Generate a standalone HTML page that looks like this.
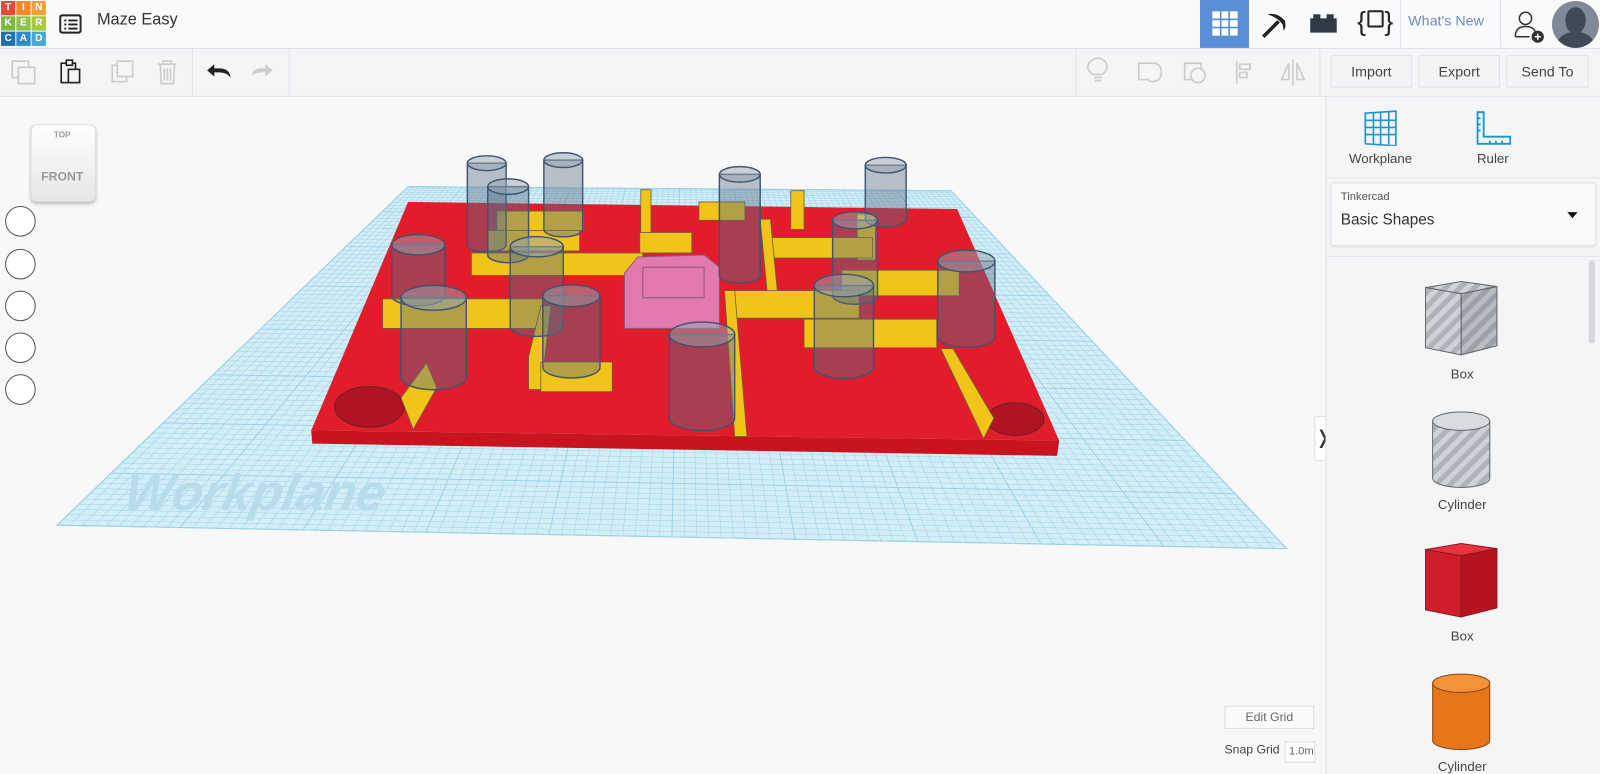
<!DOCTYPE html>
<html><head><meta charset="utf-8"><style>
html,body{margin:0;padding:0;width:1600px;height:774px;overflow:hidden;background:#f8f8f8;font-family:"Liberation Sans",sans-serif}
#w{position:absolute;left:0;top:0;width:1568px;height:759px;transform:scale(1.0204,1.0198);transform-origin:0 0;background:#f8f8f8}
.hdr{position:absolute;left:0;top:0;width:1568px;height:47px;background:#f9fafb;border-bottom:1px solid #dde1e6}
.tb{position:absolute;left:0;top:48px;width:1568px;height:46px;background:#f4f5f7;border-bottom:1px solid #e1e3e6}
.btn{position:absolute;top:54px;height:30px;border:1px solid #e2e4e7;background:#f3f4f6;color:#444;font-size:14px;line-height:30px;text-align:center}
.side{position:absolute;left:1299px;top:95px;width:269px;height:664px;background:#f4f5f7;border-left:1px solid #e3e5e8}
.lbl{position:absolute;font-size:13px;color:#444;text-align:center}
.circ{position:absolute;left:5px;width:30px;height:30px;border:1px solid #555;border-radius:50%;background:#fff;box-sizing:border-box}
</style></head><body><div id="w">
<div class="hdr">
 <div style="position:absolute;left:1px;top:1px;width:44px;height:44px;display:grid;grid-template-columns:repeat(3,14px);gap:1px;font:bold 10px 'Liberation Sans';color:#fff;text-align:center;line-height:14px">
  <div style="background:#e6483a">T</div><div style="background:#f08a2c">I</div><div style="background:#f0a03a">N</div>
  <div style="background:#7dbb3f">K</div><div style="background:#8fc24a">E</div><div style="background:#a8c83c">R</div>
  <div style="background:#1f6fb2">C</div><div style="background:#2f8ccc">A</div><div style="background:#4ba6d8">D</div></div>
 <svg style="position:absolute;left:58px;top:14px" width="22" height="20"><rect x="1" y="1" width="20" height="17" rx="2" fill="none" stroke="#222" stroke-width="2"/><path d="M5 6h2M9 6h9M5 10h2M9 10h9M5 14h2M9 14h9" stroke="#222" stroke-width="1.8"/></svg>
 <div style="position:absolute;left:95px;top:11px;font-size:16px;color:#333">Maze Easy</div>
 <div style="position:absolute;left:1176px;top:0;width:48px;height:47px;background:#5a8fd6"></div>
 <svg style="position:absolute;left:1188px;top:11px" width="25" height="24"><rect width="25" height="24" fill="#fff"/><path d="M8.3 0v24M16.6 0v24M0 8h25M0 16h25" stroke="#5a8fd6" stroke-width="1.6"/></svg>
 <svg style="position:absolute;left:1233px;top:9px" width="30" height="30"><path d="M5 27L20 12" stroke="#222" stroke-width="3.5"/><path d="M9 5q10 -2 17 6q2 6 -1 10l-1 -6q-5 -7 -15 -10z" fill="#222"/></svg>
 <svg style="position:absolute;left:1283px;top:13px" width="28" height="20"><rect x="1" y="5" width="26" height="14" fill="#2f3a48"/><rect x="4" y="1" width="7" height="6" fill="#2f3a48"/><rect x="17" y="1" width="7" height="6" fill="#2f3a48"/></svg>
 <div style="position:absolute;left:1330px;top:6px;font-size:26px;color:#222">{<span style="display:inline-block;width:12px;height:13px;border:2px solid #222;border-radius:2px;vertical-align:3px;margin:0 1px"></span>}</div>
 <div style="position:absolute;left:1372px;top:0;width:1px;height:47px;background:#e2e4e7"></div>
 <div style="position:absolute;left:1380px;top:12px;font-size:14px;color:#6c8fc0">What's New</div>
 <div style="position:absolute;left:1470px;top:0;width:1px;height:47px;background:#e2e4e7"></div>
 <svg style="position:absolute;left:1482px;top:9px" width="36" height="34"><circle cx="13" cy="9" r="6" fill="none" stroke="#333" stroke-width="1.5"/><path d="M3 27q0 -10 10 -10q8 0 10 6M3 27h14" fill="none" stroke="#333" stroke-width="1.5"/><circle cx="25" cy="27" r="6" fill="#333"/><path d="M25 24v6M22 27h6" stroke="#fff" stroke-width="1.5"/></svg>
 <div style="position:absolute;left:1521px;top:1px;width:46px;height:46px;border-radius:50%;background:#7f8a96;overflow:hidden"><div style="position:absolute;left:13px;top:6px;width:20px;height:26px;border-radius:50%;background:#3f4a57"></div><div style="position:absolute;left:4px;top:30px;width:38px;height:30px;border-radius:50%;background:#3f4a57"></div></div>
</div>
<div class="tb">
 <svg style="position:absolute;left:10px;top:10px" width="300" height="28" fill="none" stroke-width="1.6">
  <rect x="2" y="2" width="16" height="16" stroke="#ccc"/><rect x="8" y="8" width="16" height="16" stroke="#ccc" fill="#f4f5f7"/>
  <rect x="50" y="4" width="14" height="19" stroke="#222"/><rect x="55" y="1" width="6" height="5" stroke="#222" fill="#f4f5f7"/><rect x="57" y="10" width="11" height="13" stroke="#222" fill="#f4f5f7"/>
  <rect x="100" y="6" width="14" height="16" stroke="#ccc"/><rect x="105" y="2" width="15" height="15" stroke="#ccc" fill="#f4f5f7"/>
  <path d="M145 5h18M150 5v-3h8v3M147 6l1 18h12l1 -18M151 9v12M154 9v12M157 9v12" stroke="#ccc"/>
 </svg>
 <div style="position:absolute;left:188px;top:0;width:1px;height:46px;background:#e1e3e6"></div>
 <svg style="position:absolute;left:200px;top:12px" width="70" height="20"><path d="M3 9l7 -6v4h5q10 0 11 9q-4 -5 -11 -5h-5v4z" fill="#222"/><path d="M67 9l-7 -6v4h-5q-7 0 -8 7q4 -3 8 -3h5v4z" fill="#ccc"/></svg>
 <div style="position:absolute;left:283px;top:0;width:1px;height:46px;background:#e1e3e6"></div>
 <svg style="position:absolute;left:1050px;top:8px" width="240" height="30" fill="none" stroke="#ccc" stroke-width="1.6">
  <path d="M27 23h6M26 20h8M25 17q-7 -5 -4 -11q4 -5 9 -5q5 0 8 5q3 6 -4 11z" transform="translate(-4 0)"/>
  <path d="M66 6h14q8 0 8 9q0 9 -9 9q-3 0 -4 -2h-9z"/>
  <rect x="111" y="6" width="16" height="16"/><circle cx="124" cy="18" r="7" fill="#f4f5f7"/>
  <path d="M162 4v22M165 7h10v5h-10zM165 15h7v5h-7z"/>
  <path d="M217 2v26M213 6l-7 16h7zM221 6l7 16h-7z"/>
 </svg>
 <div style="position:absolute;left:1054px;top:0;width:1px;height:46px;background:#e1e3e6"></div>
 <div style="position:absolute;left:1293px;top:0;width:1px;height:46px;background:#e1e3e6"></div>
</div>
<div class="btn" style="left:1304px;width:78px">Import</div>
<div class="btn" style="left:1390px;width:78px">Export</div>
<div class="btn" style="left:1476px;width:79px">Send To</div>

<svg id="sc" style="position:absolute;left:0;top:95px" width="1299" height="664" viewBox="0 95 1299 664"></svg>

<div style="position:absolute;left:30px;top:122px;width:62px;height:74px;background:linear-gradient(#fff,#e6e6e6);border:1px solid #ddd;border-radius:6px;box-shadow:0 2px 3px #bbb"></div>
<div style="position:absolute;left:30px;top:128px;width:62px;font:bold 8px 'Liberation Sans';color:#999;text-align:center">TOP</div>
<div style="position:absolute;left:30px;top:166px;width:62px;font:bold 12px 'Liberation Sans';color:#999;text-align:center">FRONT</div>
<div class="circ" style="top:202px"></div><div class="circ" style="top:244px"></div><div class="circ" style="top:285px"></div><div class="circ" style="top:326px"></div><div class="circ" style="top:367px"></div>

<div style="position:absolute;left:1200px;top:692px;width:86px;height:21px;border:1px solid #ddd;background:#fafafa;font-size:12px;color:#666;text-align:center;line-height:20px">Edit Grid</div>
<div style="position:absolute;left:1200px;top:728px;font-size:12px;color:#444">Snap Grid</div>
<div style="position:absolute;left:1259px;top:727px;width:28px;height:19px;border:1px solid #ddd;background:#fff;font-size:11px;color:#666;line-height:19px;overflow:hidden;white-space:nowrap">&nbsp;1.0mm</div>
<div style="position:absolute;left:1288px;top:408px;width:15px;height:42px;background:#fff;border:1px solid #ddd;font-size:18px;line-height:40px;text-align:center;color:#333">&#x276D;</div>

<div class="side">
 <svg style="position:absolute;left:36px;top:12px" width="34" height="36" fill="none" stroke="#1e96c8" stroke-width="1.6"><path d="M2 4l30 -2v34l-30 -2z"/><path d="M2 11h30M2 18h30M2 25h30M10 3.5v31M17 3v32M25 2.5v32"/></svg>
 <div class="lbl" style="left:16px;top:53px;width:74px">Workplane</div>
 <svg style="position:absolute;left:146px;top:13px" width="36" height="36" fill="none" stroke="#1e96c8" stroke-width="1.8"><path d="M2 2h6v24h26v7h-32z"/><path d="M2 8h3M2 14h3M2 20h3M14 33v-3M20 33v-3M26 33v-3"/></svg>
 <div class="lbl" style="left:130px;top:53px;width:66px">Ruler</div>
 <div style="position:absolute;left:0;top:79px;width:269px;height:1px;background:#e3e5e8"></div>
 <div style="position:absolute;left:4px;top:84px;width:258px;height:60px;background:#f9fafb;border:1px solid #e3e5e8;border-radius:3px;box-shadow:0 1px 2px #ddd"></div>
 <div style="position:absolute;left:14px;top:92px;font-size:11px;color:#555">Tinkercad</div>
 <div style="position:absolute;left:14px;top:112px;font-size:15px;color:#333">Basic Shapes</div>
 <div style="position:absolute;left:236px;top:113px;width:0;height:0;border-left:5px solid transparent;border-right:5px solid transparent;border-top:6px solid #111"></div>
 <div style="position:absolute;left:0;top:156px;width:269px;height:1px;background:#e3e5e8"></div>
 <div style="position:absolute;left:257px;top:160px;width:6px;height:82px;border-radius:3px;background:#d6d8db"></div>
 <svg style="position:absolute;left:90px;top:175px" width="80" height="90">
  <defs><pattern id="st" width="10" height="10" patternUnits="userSpaceOnUse" patternTransform="rotate(45)"><rect width="10" height="10" fill="#aeb3ba"/><rect width="5" height="10" fill="#cfd3d8"/></pattern></defs>
  <path d="M7 12l35 -6 35 5 -35 7z" fill="url(#st)" stroke="#666"/><path d="M7 12l35 6v60l-35 -7z" fill="url(#st)" stroke="#666"/><path d="M42 18l35 -7v58l-35 9z" fill="url(#st)" stroke="#666"/><path d="M42 18l35-7v58l-35 9z" fill="#000" opacity=".1"/>
 </svg>
 <div class="lbl" style="left:100px;top:264px;width:66px">Box</div>
 <svg style="position:absolute;left:100px;top:306px" width="64" height="80"><path d="M4 12v56a28 9 0 0 0 56 0v-56z" fill="url(#st)" stroke="#666"/><ellipse cx="32" cy="12" rx="28" ry="9" fill="#d8dbe0" stroke="#666"/></svg>
 <div class="lbl" style="left:100px;top:392px;width:66px">Cylinder</div>
 <svg style="position:absolute;left:90px;top:432px" width="80" height="90"><path d="M7 12l35 -6 35 5 -35 7z" fill="#e8323f" stroke="#8a1a22"/><path d="M7 12l35 6v60l-35 -7z" fill="#cf1d2a" stroke="#8a1a22"/><path d="M42 18l35 -7v58l-35 9z" fill="#b5141f" stroke="#8a1a22"/></svg>
 <div class="lbl" style="left:100px;top:521px;width:66px">Box</div>
 <svg style="position:absolute;left:100px;top:563px" width="64" height="84"><path d="M4 12v56a28 9 0 0 0 56 0v-56z" fill="#e6761a" stroke="#8a4610"/><ellipse cx="32" cy="12" rx="28" ry="9" fill="#f39238" stroke="#8a4610"/></svg>
 <div class="lbl" style="left:100px;top:649px;width:66px">Cylinder</div>
</div>
</div>
<script>
var s=document.getElementById('sc'),h='';
function P(pts,f,st,sw,op){h+='<polygon points="'+pts+'" fill="'+f+'" stroke="'+(st||'none')+'" stroke-width="'+(sw||1)+'"'+(op?' opacity="'+op+'"':'')+'/>';}
function L(a,b,c,d,col,w){h+='<line x1="'+a+'" y1="'+b+'" x2="'+c+'" y2="'+d+'" stroke="'+col+'" stroke-width="'+w+'"/>';}
// workplane
var TL=[400,183],TR=[932,187],BR=[1261,538],BL=[56,515];
P(TL+' '+TR+' '+BR+' '+BL,'#d4eef8','#7cc4e2',1);
function lerp(a,b,t){return [a[0]+(b[0]-a[0])*t,a[1]+(b[1]-a[1])*t];}
for(var i=0;i<=100;i++){var t=i/100,a=lerp(TL,TR,t),b=lerp(BL,BR,t);L(a[0],a[1],b[0],b[1],'#9dd3ea',i%10?0.5:1);}
for(var i=0;i<=80;i++){var t=i/80;t=Math.pow(t,1.25);var a=lerp(TL,BL,t),b=lerp(TR,BR,t);L(a[0],a[1],b[0],b[1],'#9dd3ea',i%10?0.5:1);}
h+='<text x="120" y="500" font-family="Liberation Sans" font-weight="bold" font-style="italic" font-size="50" fill="#b8dcea" transform="skewX(-10) translate(88 0)" >Workplane</text>';
// board
P('305,422 1038,432 1036,447 306,435','#c8141f');
P('400,198 938,205 1038,432 305,422','#e21d2b');
// holes
h+='<ellipse cx="362" cy="399" rx="34" ry="20" fill="#b01420" stroke="#6a1f2a"/>';
h+='<ellipse cx="995" cy="411" rx="28" ry="16" fill="#b01420" stroke="#6a1f2a"/>';
var Y='#f0c419',YS='#6b6040';
function W(x1,y1,x2,y2){P(x1+','+y1+' '+x2+','+y1+' '+x2+','+y2+' '+x1+','+y2,Y,YS,0.8);}
W(487,207,572,226);W(478,226,568,246);W(627,228,678,248);W(628,186,638,228);W(685,198,730,216);W(775,187,788,225);W(840,210,858,255);
W(750,233,855,253);W(462,248,630,270);W(825,265,940,290);
P('745,215 755,215 762,288 752,288',Y,YS,0.8);
W(720,285,842,312);W(375,293,532,322);W(788,313,918,341);
P('518,350 530,300 540,300 530,382 518,382',Y,YS,0.8);W(530,355,600,384);
P('710,285 720,285 732,428 720,428',Y,YS,0.8);
P('393,390 418,356 428,380 405,421',Y,YS,0.8);
P('922,342 934,342 974,410 964,430',Y,YS,0.8);
// pink
P('612,322 612,268 625,252 690,250 705,262 705,322','#e27ab0','#8a5a80',1);
h+='<rect x="630" y="262" width="60" height="30" fill="none" stroke="#8a5a80"/>';
// cylinders
function C(cx,t,b,r){var ry=r*0.38;
h+='<path d="M'+(cx-r)+' '+t+'V'+b+'A'+r+' '+ry+' 0 0 0 '+(cx+r)+' '+b+'V'+t+'z" fill="#5a6e82" fill-opacity="0.42" stroke="#3d5570" stroke-width="1.4"/>';
h+='<ellipse cx="'+cx+'" cy="'+t+'" rx="'+r+'" ry="'+ry+'" fill="#9aa6b2" fill-opacity="0.5" stroke="#3d5570" stroke-width="1.4"/>';}
C(477,160,240,19);C(552,157,225,19);C(498,183,250,20);C(725,171,270,20);C(868,162,215,20);C(838,216,290,22);
C(410,240,290,26);C(526,242,320,26);C(947,256,330,28);C(425,292,370,32);C(560,290,360,28);C(827,280,360,29);C(688,328,410,32);
s.innerHTML=h;
</script>
</body></html>
